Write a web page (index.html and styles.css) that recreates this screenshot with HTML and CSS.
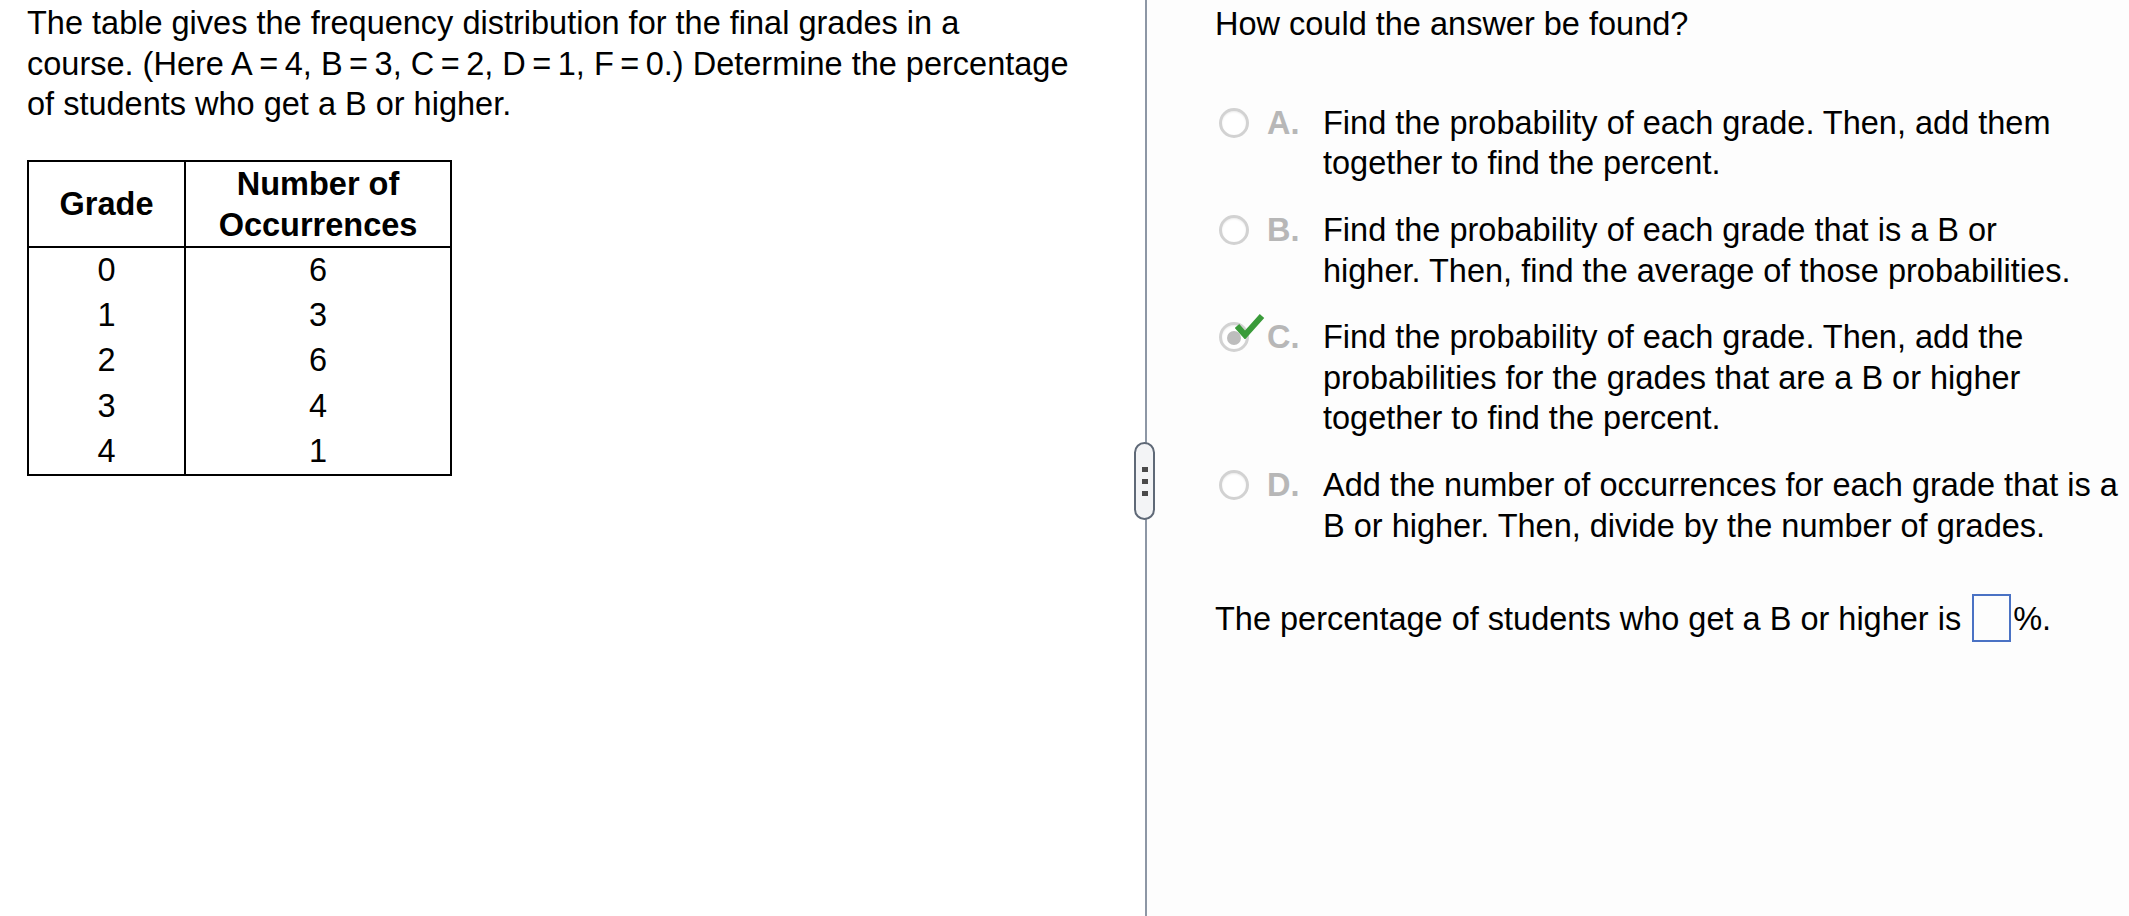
FILE: index.html
```html
<!DOCTYPE html>
<html lang="en">
<head>
  <meta charset="UTF-8" />
  <title>Grades question</title>
  <link rel="stylesheet" href="styles.css">
</head>
<body>
  <div class="page">
    <div class="left">
      <p class="question">The table gives the frequency distribution for the final grades in a<br>course. (Here A&#8201;=&#8201;4, B&#8201;=&#8201;3, C&#8201;=&#8201;2, D&#8201;=&#8201;1, F&#8201;=&#8201;0.) Determine the percentage<br>of students who get a B or higher.</p>

      <table class="grades">
        <thead>
          <tr>
            <th class="col-grade">Grade</th>
            <th class="col-num">Number of<br>Occurrences</th>
          </tr>
        </thead>
        <tbody>
          <tr><td>0</td><td>6</td></tr>
          <tr><td>1</td><td>3</td></tr>
          <tr><td>2</td><td>6</td></tr>
          <tr><td>3</td><td>4</td></tr>
          <tr><td>4</td><td>1</td></tr>
        </tbody>
      </table>
    </div>

    <div class="divider">
      <div class="handle">
        <span></span><span></span><span></span>
      </div>
    </div>

    <div class="right">
      <p class="prompt">How could the answer be found?</p>

      <div class="option">
        <span class="radio"></span>
        <span class="letter">A.</span>
        <span class="text">Find the probability of each grade. Then, add them<br>together to find the percent.</span>
      </div>

      <div class="option">
        <span class="radio"></span>
        <span class="letter">B.</span>
        <span class="text">Find the probability of each grade that is a B or<br>higher. Then, find the average of those probabilities.</span>
      </div>

      <div class="option">
        <span class="radio selected">
          <svg class="check" width="30" height="26" viewBox="0 0 30 26">
            <polyline points="2,13 10,22 27,3" fill="none" stroke="#3a9b3a" stroke-width="6" stroke-linejoin="miter" />
          </svg>
        </span>
        <span class="letter">C.</span>
        <span class="text">Find the probability of each grade. Then, add the<br>probabilities for the grades that are a B or higher<br>together to find the percent.</span>
      </div>

      <div class="option">
        <span class="radio"></span>
        <span class="letter">D.</span>
        <span class="text">Add the number of occurrences for each grade that is a<br>B or higher. Then, divide by the number of grades.</span>
      </div>

      <p class="answer">The percentage of students who get a B or higher is <span class="answer-box"></span>%.</p>
    </div>
  </div>
</body>
</html>
```

FILE: styles.css
```css
body {
  margin: 0;
  font-family: "Liberation Sans", Arial, sans-serif;
  font-size: 32.5px;
  line-height: 1.25;
  color: #000;
  background: #fff;
}
.page {
  display: flex;
  min-height: 100vh;
}
.left {
  width: 1145px;
  box-sizing: border-box;
  padding: 3px 0 0 27px;
}
.question {
  margin: 0 0 35px;
}
.grades {
  border-collapse: collapse;
  border: 2px solid #000;
}
.grades th {
  font-weight: bold;
  padding: 2px 0 1px;
  border: 2px solid #000;
}
.grades td {
  text-align: center;
  padding: 2px 0 2.5px;
  border-left: 2px solid #000;
  border-right: 2px solid #000;
}
.col-grade {
  width: 155px;
}
.col-num {
  width: 264px;
}
.divider {
  width: 2px;
  background: #8d97a5;
  position: relative;
}
.handle {
  position: absolute;
  top: 442px;
  left: -11px;
  width: 21px;
  height: 78px;
  box-sizing: border-box;
  border: 2px solid #5f6977;
  border-radius: 11px;
  background: #f3f4f6;
  display: flex;
  flex-direction: column;
  align-items: center;
  justify-content: center;
  gap: 7px;
}
.handle span {
  width: 6px;
  height: 5px;
  background: #4a4a4a;
}
.right {
  flex: 1;
  padding: 4px 0 0 68px;
  background: #fdfdfd;
}
.prompt {
  margin: 0 0 58px;
}
.option {
  display: flex;
  align-items: flex-start;
  margin: 0 0 26px 4px;
}
.radio {
  position: relative;
  flex: none;
  width: 30px;
  height: 30px;
  box-sizing: border-box;
  margin-top: 5px;
  margin-right: 18px;
  border: 3px solid #d2d2d2;
  border-radius: 50%;
  background: #fff;
  box-shadow: inset 0 1px 2px rgba(0, 0, 0, 0.08);
}
.radio.selected::after {
  content: "";
  position: absolute;
  left: 5px;
  top: 6px;
  width: 14px;
  height: 14px;
  border-radius: 50%;
  background: #bdbdbd;
}
.check {
  position: absolute;
  left: 13px;
  top: -12px;
  z-index: 1;
}
.letter {
  flex: none;
  width: 56px;
  font-weight: bold;
  color: #b7b7b7;
}
.text {
  white-space: nowrap;
}
.answer {
  margin: 53px 0 0;
}
.answer-box {
  display: inline-block;
  width: 39px;
  height: 48px;
  box-sizing: border-box;
  border: 2px solid #4a72c4;
  vertical-align: middle;
  margin: -8px 2px 0 2px;
}
```
